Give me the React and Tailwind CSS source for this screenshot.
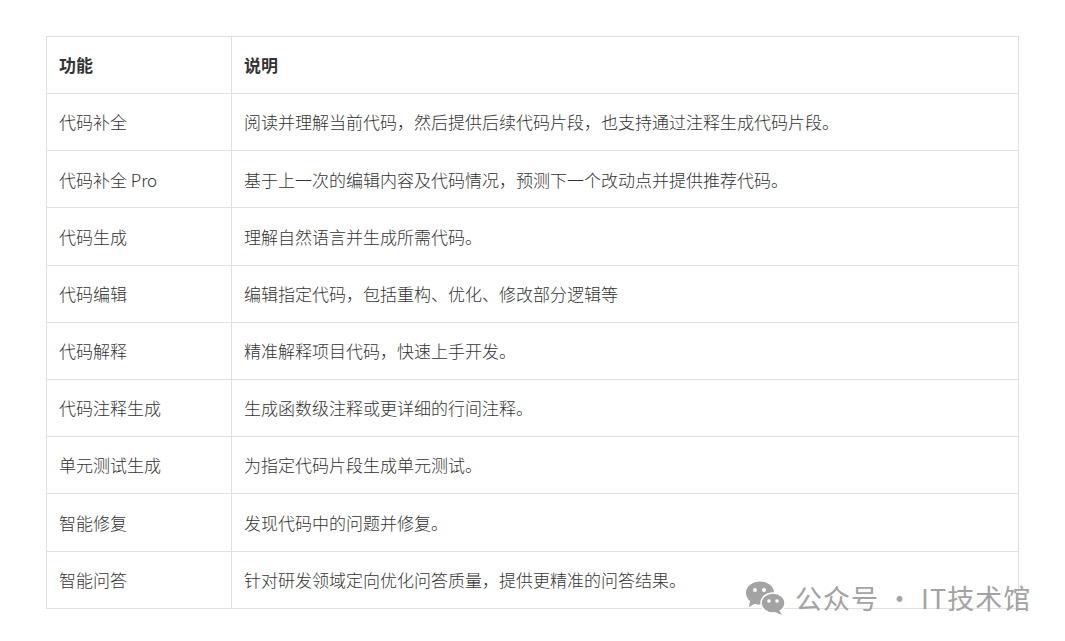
import React from "react";

const rows = [
  ["代码补全", "阅读并理解当前代码，然后提供后续代码片段，也支持通过注释生成代码片段。"],
  ["代码补全 Pro", "基于上一次的编辑内容及代码情况，预测下一个改动点并提供推荐代码。"],
  ["代码生成", "理解自然语言并生成所需代码。"],
  ["代码编辑", "编辑指定代码，包括重构、优化、修改部分逻辑等"],
  ["代码解释", "精准解释项目代码，快速上手开发。"],
  ["代码注释生成", "生成函数级注释或更详细的行间注释。"],
  ["单元测试生成", "为指定代码片段生成单元测试。"],
  ["智能修复", "发现代码中的问题并修复。"],
  ["智能问答", "针对研发领域定向优化问答质量，提供更精准的问答结果。"],
];

export default function App() {
  return (
    <div className="relative h-[641px] w-[1065px] bg-white text-[#333] text-[17px]" style={{ fontFamily: '"Noto Sans CJK SC", "Liberation Sans", sans-serif' }}>
      <div className="pt-[36px] pl-[46px]">
        <table className="w-[973px] border-collapse">
          <thead>
            <tr className="h-[57px]">
              <th className="w-[185px] border border-[#e0e0e0] pl-3 text-left font-bold">功能</th>
              <th className="border border-[#e0e0e0] pl-3 text-left font-bold">说明</th>
            </tr>
          </thead>
          <tbody>
            {rows.map(([a, b]) => (
              <tr key={a} className="h-[57.2px]">
                <td className="border border-[#e0e0e0] pl-3 font-light">{a}</td>
                <td className="border border-[#e0e0e0] pl-3 font-light">{b}</td>
              </tr>
            ))}
          </tbody>
        </table>
      </div>
      <div className="absolute left-[745px] top-[578px] flex items-center gap-2 text-[27px] text-[#a3a3a3]">
        <svg width="42" height="36" viewBox="0 0 42 36">
          <ellipse cx="15" cy="13" rx="14" ry="11.5" fill="#a3a3a3" />
          <path d="M5 21 L4 27 L11 23 Z" fill="#a3a3a3" />
          <circle cx="10" cy="10" r="2" fill="white" />
          <circle cx="19" cy="10" r="2" fill="white" />
          <ellipse cx="28" cy="23" rx="12" ry="10" fill="#a3a3a3" stroke="white" strokeWidth="1.5" />
          <path d="M34 30 L37 35 L30 32 Z" fill="#a3a3a3" />
          <circle cx="24" cy="21" r="1.8" fill="white" />
          <circle cx="32" cy="21" r="1.8" fill="white" />
        </svg>
        <span className="tracking-[1px]">公众号 · IT技术馆</span>
      </div>
    </div>
  );
}
